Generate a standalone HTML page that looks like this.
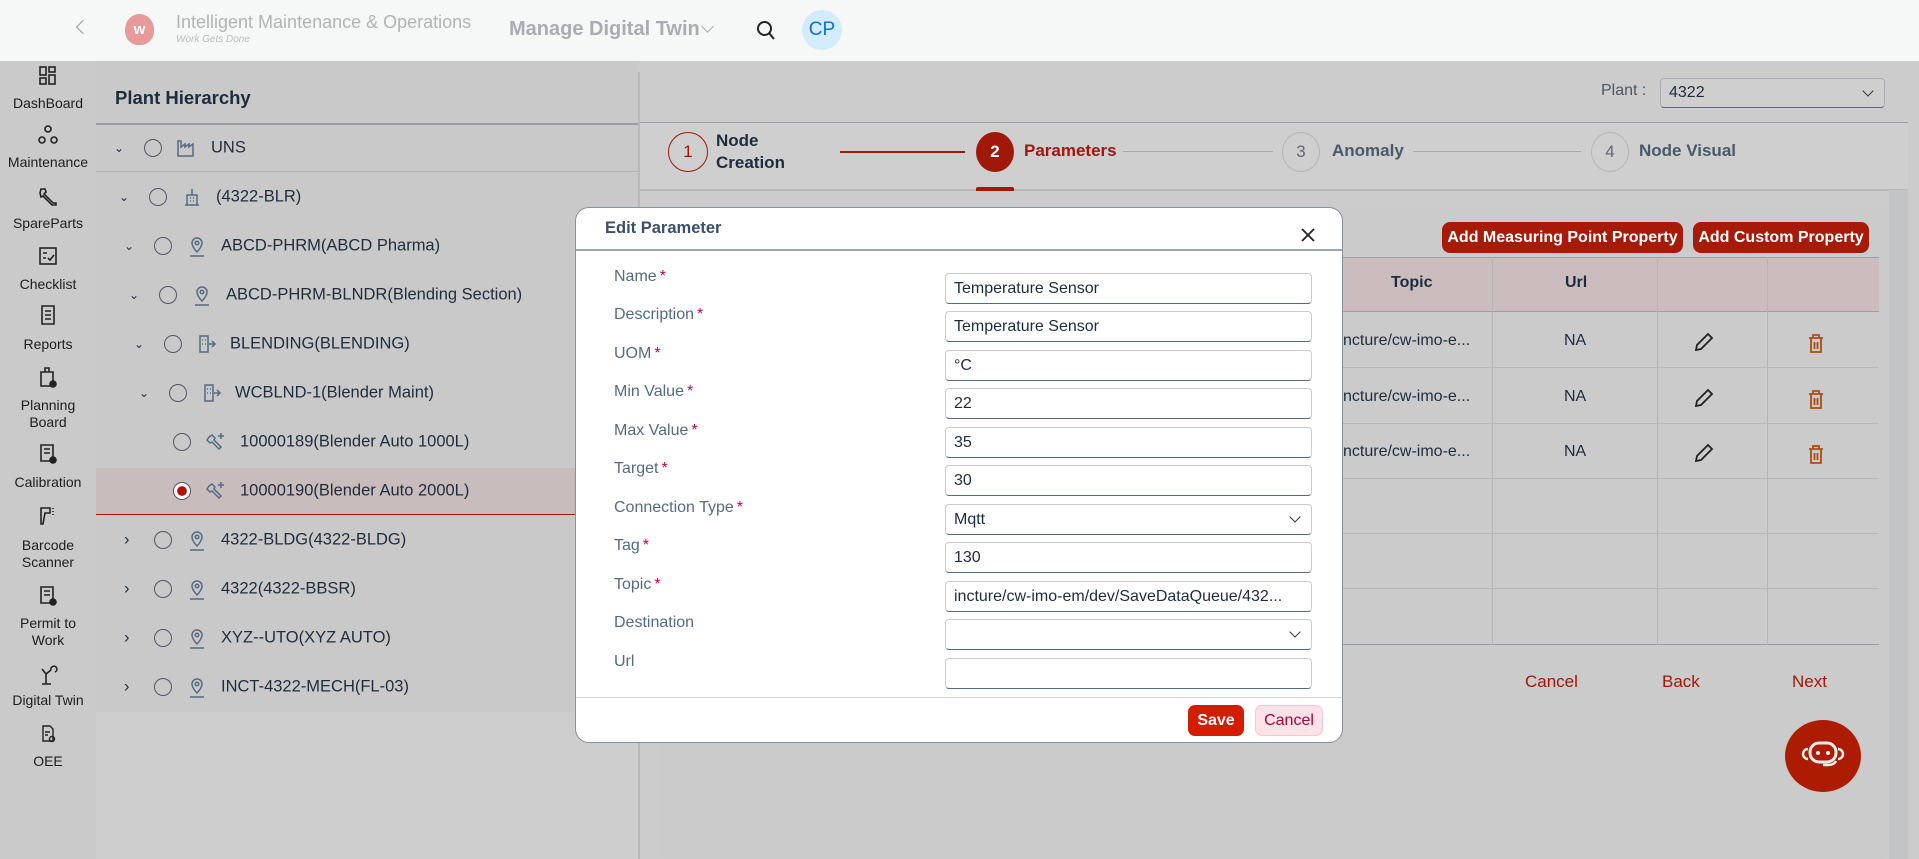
<!DOCTYPE html>
<html><head><meta charset="utf-8"><style>
*{box-sizing:border-box;margin:0;padding:0}
body{width:1919px;height:859px;overflow:hidden;position:relative;background:#cbcbcb;font-family:"Liberation Sans",sans-serif;color:#32363a}
.a{position:absolute}
.top{left:0;top:0;width:1919px;height:61px;background:#f6f7f7}
.side{left:0;top:61px;width:96px;height:798px;background:#cacaca}
.si{position:absolute;left:0;width:96px;text-align:center;font-size:14px;color:#1d1d1d;line-height:17px}
.ic{position:absolute;left:37px}
.tree{left:96px;top:61px;width:542px;height:798px;background:#c9c9c9}
.row{position:absolute;left:96px;width:542px;height:49px;font-size:16.5px;color:#1f2d3d}
.row span{position:absolute;top:50%;transform:translateY(-50%)}
.row svg{position:absolute;top:15px}
.rad{width:18px;height:18px;border:1.5px solid #556;border-radius:50%}
.lbl{position:absolute;left:614px;font-size:16px;color:#556b82}
.lbl b{color:#c0005a;font-weight:normal;margin-left:3px}
.inp{position:absolute;left:945px;width:367px;height:31px;background:#fff;border:1px solid #c8ccd2;border-bottom:1.5px solid #556b82;border-radius:4px;font-size:16px;padding:6px 8px;color:#1d2d3e;white-space:nowrap;overflow:hidden}
.chev{position:absolute;right:12px;top:8px;width:8px;height:8px;border-right:1.5px solid #333;border-bottom:1.5px solid #333;transform:rotate(45deg)}
.th{position:absolute;font-size:16px;font-weight:bold;color:#1d2d3e}
.td{position:absolute;font-size:16px;color:#1d2d3e}
</style></head><body>
<div class="a top"></div>
<div class="a" style="left:78px;top:22px;width:10px;height:10px;border-left:1.5px solid #999;border-bottom:1.5px solid #999;transform:rotate(45deg)"></div>
<div class="a" style="left:125px;top:14px;width:29px;height:31px;border-radius:50% 50% 45% 45%;background:#e89a9a;color:#fff;font-weight:bold;font-size:15px;text-align:center;line-height:32px">w</div>
<div class="a" style="left:176px;top:12px;font-size:18px;color:#b3b3b3">Intelligent Maintenance &amp; Operations</div>
<div class="a" style="left:176px;top:34px;font-size:10px;color:#bbb;font-style:italic">Work Gets Done</div>
<div class="a" style="left:509px;top:18px;font-size:20px;color:#a9adb2;font-weight:bold">Manage Digital Twin</div>
<div class="a" style="left:703px;top:22px;width:9px;height:9px;border-right:1.5px solid #a9adb2;border-bottom:1.5px solid #a9adb2;transform:rotate(45deg)"></div>
<svg class="a" style="left:756px;top:20px" width="20" height="22" viewBox="0 0 20 22"><circle cx="8.5" cy="8.5" r="6.5" fill="none" stroke="#222" stroke-width="2"/><path d="M13 13l5 6" stroke="#222" stroke-width="2"/></svg>
<div class="a" style="left:802px;top:10px;width:40px;height:40px;border-radius:50%;background:#d3ecfb;color:#1470c8;font-size:19px;text-align:center;line-height:40px">CP</div>

<div class="a side"></div>
<svg class="ic" style="top:65px" width="22" height="22" viewBox="0 0 22 22" fill="none" stroke="#222" stroke-width="1.6"><rect x="3" y="2" width="6" height="8"/><rect x="12" y="2" width="6" height="5"/><rect x="3" y="13" width="6" height="6"/><rect x="12" y="10" width="6" height="9"/></svg>
<div class="si" style="top:95px">DashBoard</div>
<svg class="ic" style="top:124px" width="22" height="22" viewBox="0 0 22 22" fill="none" stroke="#222" stroke-width="1.6"><circle cx="11" cy="5" r="3"/><circle cx="5" cy="16" r="3"/><circle cx="17" cy="16" r="3"/></svg>
<div class="si" style="top:154px">Maintenance</div>
<svg class="ic" style="top:185px" width="22" height="22" viewBox="0 0 22 22" fill="none" stroke="#222" stroke-width="1.6"><path d="M4 4l4 0 1 3-2 2 9 9 3 0 0 2-4 0-9-9-2 1-1-4z"/></svg>
<div class="si" style="top:215px">SpareParts</div>
<svg class="ic" style="top:245px" width="22" height="22" viewBox="0 0 22 22" fill="none" stroke="#222" stroke-width="1.6"><rect x="3" y="3" width="16" height="16"/><path d="M6 8h4M6 13h3M11 13l2 2 4-5"/></svg>
<div class="si" style="top:276px">Checklist</div>
<svg class="ic" style="top:304px" width="22" height="22" viewBox="0 0 22 22" fill="none" stroke="#222" stroke-width="1.6"><path d="M5 2h12v18H5zM8 7h6M8 11h6M8 15h6"/></svg>
<div class="si" style="top:336px">Reports</div>
<svg class="ic" style="top:366px" width="22" height="24" viewBox="0 0 22 24" fill="none" stroke="#222" stroke-width="1.6"><path d="M4 6h12v14H4zM8 6V2h4v4"/><circle cx="16" cy="18" r="3" fill="#222"/></svg>
<div class="si" style="top:397px">Planning<br>Board</div>
<svg class="ic" style="top:443px" width="22" height="22" viewBox="0 0 22 22" fill="none" stroke="#222" stroke-width="1.6"><path d="M4 2h12v16H4zM7 6h6M7 10h6"/><circle cx="16" cy="17" r="3" fill="#222"/></svg>
<div class="si" style="top:474px">Calibration</div>
<svg class="ic" style="top:505px" width="22" height="22" viewBox="0 0 22 22" fill="none" stroke="#222" stroke-width="1.6"><path d="M4 3h9v5H8l-2 11H4zM16 3v1M16 6v1M16 9v1"/></svg>
<div class="si" style="top:537px">Barcode<br>Scanner</div>
<svg class="ic" style="top:585px" width="22" height="22" viewBox="0 0 22 22" fill="none" stroke="#222" stroke-width="1.6"><path d="M4 2h12v16H4zM7 6h6M7 10h6"/><circle cx="16" cy="17" r="3" fill="#222"/></svg>
<div class="si" style="top:615px">Permit to<br>Work</div>
<svg class="ic" style="top:664px" width="22" height="22" viewBox="0 0 22 22" fill="none" stroke="#222" stroke-width="1.6"><path d="M5 20h9M9 20V10l-4-5M9 10l5-4M14 6a3 3 0 1 1 4 2"/></svg>
<div class="si" style="top:692px">Digital Twin</div>
<svg class="ic" style="top:724px" width="22" height="20" viewBox="0 0 22 20" fill="none" stroke="#222" stroke-width="1.4"><path d="M6 2h7l3 3v12H6zM8 8h5M8 11h3"/><circle cx="15" cy="15" r="2.5"/></svg>
<div class="si" style="top:753px">OEE</div>

<div class="a tree"></div>
<div class="a" style="left:96px;top:712px;width:542px;height:147px;background:#cdcdcd"></div>
<div class="a" style="left:115px;top:87px;font-size:18.5px;font-weight:bold;color:#1d2d3e">Plant Hierarchy</div>
<div class="a" style="left:96px;top:123px;width:542px;height:2px;background:#9aa0a8"></div>
<div class="a" style="left:96px;top:171px;width:542px;height:1px;background:#b4b4b4"></div>
<div class="a" style="left:96px;top:468px;width:542px;height:47px;background:#c9bcbc;border-bottom:1.5px solid #a01808"></div>

<div class="row" style="top:123px"><span style="left:18px;font-size:12px">⌄</span><span class="rad" style="left:48px"></span><svg style="left:80px" width="20" height="20" viewBox="0 0 20 20" fill="none" stroke="#556b82" stroke-width="1.5"><path d="M2 18V3h3v6l4-3v3l4-3v3l4-3v12z"/></svg><span style="left:115px">UNS</span></div>
<div class="row" style="top:172px"><span style="left:23px;font-size:12px">⌄</span><span class="rad" style="left:53px"></span><svg style="left:86px" width="20" height="20" viewBox="0 0 20 20" fill="none" stroke="#556b82" stroke-width="1.5"><path d="M3 18h14M5 18V8h10v10M10 8V2M8 11h1M11 11h1M8 14h1M11 14h1"/></svg><span style="left:120px">(4322-BLR)</span></div>
<div class="row" style="top:221px"><span style="left:28px;font-size:12px">⌄</span><span class="rad" style="left:58px"></span><svg style="left:91px" width="20" height="22" viewBox="0 0 20 22" fill="none" stroke="#556b82" stroke-width="1.5"><path d="M10 16s-5-5-5-9a5 5 0 0 1 10 0c0 4-5 9-5 9z"/><circle cx="10" cy="7" r="1.8"/><path d="M3 20h14"/></svg><span style="left:125px">ABCD-PHRM(ABCD Pharma)</span></div>
<div class="row" style="top:270px"><span style="left:33px;font-size:12px">⌄</span><span class="rad" style="left:63px"></span><svg style="left:96px" width="20" height="22" viewBox="0 0 20 22" fill="none" stroke="#556b82" stroke-width="1.5"><path d="M10 16s-5-5-5-9a5 5 0 0 1 10 0c0 4-5 9-5 9z"/><circle cx="10" cy="7" r="1.8"/><path d="M3 20h14"/></svg><span style="left:130px">ABCD-PHRM-BLNDR(Blending Section)</span></div>
<div class="row" style="top:319px"><span style="left:38px;font-size:12px">⌄</span><span class="rad" style="left:68px"></span><svg style="left:101px" width="20" height="20" viewBox="0 0 20 20" fill="none" stroke="#556b82" stroke-width="1.5"><path d="M3 2h8v16H3zM5 6h1M8 6h1M5 10h1M8 10h1M12 10h6M15 7l3 3-3 3"/></svg><span style="left:134px">BLENDING(BLENDING)</span></div>
<div class="row" style="top:368px"><span style="left:43px;font-size:12px">⌄</span><span class="rad" style="left:73px"></span><svg style="left:106px" width="20" height="20" viewBox="0 0 20 20" fill="none" stroke="#556b82" stroke-width="1.5"><path d="M3 2h8v16H3zM5 6h1M8 6h1M5 10h1M8 10h1M12 10h6M15 7l3 3-3 3"/></svg><span style="left:139px">WCBLND-1(Blender Maint)</span></div>
<div class="row" style="top:417px"><span class="rad" style="left:77px"></span><svg style="left:110px" width="20" height="20" viewBox="0 0 20 20" fill="none" stroke="#556b82" stroke-width="1.5"><path d="M3 5l3-2 3 3-1 2 7 7-2 2-7-7-2 1-3-3zM15 1v6M12 4h6"/></svg><span style="left:144px">10000189(Blender Auto 1000L)</span></div>
<div class="row" style="top:466px"><span class="rad" style="left:77px;background:radial-gradient(#b01200 40%,#fff 45%)"></span><svg style="left:110px" width="20" height="20" viewBox="0 0 20 20" fill="none" stroke="#556b82" stroke-width="1.5"><path d="M3 5l3-2 3 3-1 2 7 7-2 2-7-7-2 1-3-3zM15 1v6M12 4h6"/></svg><span style="left:144px">10000190(Blender Auto 2000L)</span></div>
<div class="row" style="top:515px"><span style="left:28px">›</span><span class="rad" style="left:58px"></span><svg style="left:91px" width="20" height="22" viewBox="0 0 20 22" fill="none" stroke="#556b82" stroke-width="1.5"><path d="M10 16s-5-5-5-9a5 5 0 0 1 10 0c0 4-5 9-5 9z"/><circle cx="10" cy="7" r="1.8"/><path d="M3 20h14"/></svg><span style="left:125px">4322-BLDG(4322-BLDG)</span></div>
<div class="row" style="top:564px"><span style="left:28px">›</span><span class="rad" style="left:58px"></span><svg style="left:91px" width="20" height="22" viewBox="0 0 20 22" fill="none" stroke="#556b82" stroke-width="1.5"><path d="M10 16s-5-5-5-9a5 5 0 0 1 10 0c0 4-5 9-5 9z"/><circle cx="10" cy="7" r="1.8"/><path d="M3 20h14"/></svg><span style="left:125px">4322(4322-BBSR)</span></div>
<div class="row" style="top:613px"><span style="left:28px">›</span><span class="rad" style="left:58px"></span><svg style="left:91px" width="20" height="22" viewBox="0 0 20 22" fill="none" stroke="#556b82" stroke-width="1.5"><path d="M10 16s-5-5-5-9a5 5 0 0 1 10 0c0 4-5 9-5 9z"/><circle cx="10" cy="7" r="1.8"/><path d="M3 20h14"/></svg><span style="left:125px">XYZ--UTO(XYZ AUTO)</span></div>
<div class="row" style="top:662px"><span style="left:28px">›</span><span class="rad" style="left:58px"></span><svg style="left:91px" width="20" height="22" viewBox="0 0 20 22" fill="none" stroke="#556b82" stroke-width="1.5"><path d="M10 16s-5-5-5-9a5 5 0 0 1 10 0c0 4-5 9-5 9z"/><circle cx="10" cy="7" r="1.8"/><path d="M3 20h14"/></svg><span style="left:125px">INCT-4322-MECH(FL-03)</span></div>

<div class="a" style="left:638px;top:72px;width:2px;height:787px;background:#b8b8b8"></div>
<div class="a" style="left:640px;top:61px;width:1279px;height:798px;background:#cccccc"></div>
<div class="a" style="left:1601px;top:82px;font-size:16px;color:#4a5868">Plant :</div>
<div class="a" style="left:1660px;top:78px;width:225px;height:30px;background:#cfcfcf;border:1px solid #a8adb3;border-bottom:1.5px solid #5a6a80;border-radius:4px;font-size:16px;padding:5px 8px;color:#1d2d3e">4322<div class="chev" style="top:8px"></div></div>
<div class="a" style="left:640px;top:122px;width:1268px;height:1.5px;background:#9aa0a8"></div>
<div class="a" style="left:640px;top:123px;width:1268px;height:67px;background:#cfcfcf"></div>
<div class="a" style="left:640px;top:189px;width:1268px;height:2px;background:#b8b8b8"></div>

<div class="a" style="left:668px;top:132px;width:40px;height:40px;border:1.5px solid #a01808;border-radius:50%;color:#a01808;text-align:center;line-height:38px;font-size:17px">1</div>
<div class="a" style="left:716px;top:130px;font-size:17px;font-weight:bold;color:#1d2d3e;line-height:22px">Node<br>Creation</div>
<div class="a" style="left:840px;top:151px;width:125px;height:1.5px;background:#a01808"></div>
<div class="a" style="left:976px;top:132px;width:38px;height:40px;border-radius:50%;background:#a01808;color:#fff;text-align:center;line-height:40px;font-size:17px;font-weight:bold">2</div>
<div class="a" style="left:976px;top:187px;width:38px;height:4px;background:#a01808;border-radius:2px 2px 0 0"></div>
<div class="a" style="left:1024px;top:141px;font-size:17px;font-weight:bold;color:#a01808">Parameters</div>
<div class="a" style="left:1123px;top:151px;width:150px;height:1px;background:#aaa"></div>
<div class="a" style="left:1282px;top:132px;width:38px;height:40px;border:1px solid #b5b5b5;border-radius:50%;color:#667;text-align:center;line-height:38px;font-size:17px">3</div>
<div class="a" style="left:1332px;top:141px;font-size:17px;font-weight:bold;color:#4a5868">Anomaly</div>
<div class="a" style="left:1413px;top:151px;width:168px;height:1px;background:#aaa"></div>
<div class="a" style="left:1591px;top:132px;width:38px;height:40px;border:1px solid #b5b5b5;border-radius:50%;color:#667;text-align:center;line-height:38px;font-size:17px">4</div>
<div class="a" style="left:1639px;top:141px;font-size:17px;font-weight:bold;color:#4a5868">Node Visual</div>

<div class="a" style="left:1889px;top:190px;width:19px;height:669px;background:#c3c4c6"></div>
<div class="a" style="left:658px;top:208px;width:1231px;height:651px;background:#cbcbcb;border-radius:8px"></div>
<div class="a" style="left:1442px;top:222px;width:241px;height:31px;background:#a81a08;border-radius:8px;color:#fff;font-size:16px;font-weight:bold;text-align:center;line-height:31px">Add Measuring Point Property</div>
<div class="a" style="left:1693px;top:222px;width:176px;height:31px;background:#a81a08;border-radius:8px;color:#fff;font-size:16px;font-weight:bold;text-align:center;line-height:31px">Add Custom Property</div>
<div class="a" style="left:1340px;top:257px;width:539px;height:55px;background:#cbbdbd;border-top:1px solid #9aa0a8;border-bottom:1.5px solid #9aa0a8"></div>
<div class="a" style="left:1340px;top:257px;width:539px;height:388px;border-bottom:1.5px solid #9aa0a8"></div>
<div class="a" style="left:1492px;top:257px;width:1px;height:388px;background:#b5b5b5"></div>
<div class="a" style="left:1657px;top:257px;width:1px;height:388px;background:#b5b5b5"></div>
<div class="a" style="left:1767px;top:257px;width:1px;height:388px;background:#b5b5b5"></div>
<div class="a" style="left:1340px;top:367px;width:539px;height:1px;background:#b5b5b5"></div>
<div class="a" style="left:1340px;top:423px;width:539px;height:1px;background:#b5b5b5"></div>
<div class="a" style="left:1340px;top:478px;width:539px;height:1px;background:#b5b5b5"></div>
<div class="a" style="left:1340px;top:533px;width:539px;height:1px;background:#b5b5b5"></div>
<div class="a" style="left:1340px;top:588px;width:539px;height:1px;background:#b5b5b5"></div>
<div class="th" style="left:1391px;top:274px">Topic</div>
<div class="th" style="left:1565px;top:274px">Url</div>
<div class="td" style="left:1343px;top:332px">ncture/cw-imo-e...</div><div class="td" style="left:1564px;top:332px">NA</div>
<div class="td" style="left:1343px;top:388px">ncture/cw-imo-e...</div><div class="td" style="left:1564px;top:388px">NA</div>
<div class="td" style="left:1343px;top:443px">ncture/cw-imo-e...</div><div class="td" style="left:1564px;top:443px">NA</div>
<svg class="a" style="left:1692px;top:330px" width="24" height="24" viewBox="0 0 24 24" fill="none" stroke="#222" stroke-width="1.8"><path d="M4 20l1-5 11-11 4 4-11 11z"/></svg>
<svg class="a" style="left:1692px;top:386px" width="24" height="24" viewBox="0 0 24 24" fill="none" stroke="#222" stroke-width="1.8"><path d="M4 20l1-5 11-11 4 4-11 11z"/></svg>
<svg class="a" style="left:1692px;top:441px" width="24" height="24" viewBox="0 0 24 24" fill="none" stroke="#222" stroke-width="1.8"><path d="M4 20l1-5 11-11 4 4-11 11z"/></svg>
<svg class="a" style="left:1806px;top:332px" width="20" height="22" viewBox="0 0 20 22" fill="none" stroke="#b34a10" stroke-width="1.8"><path d="M3 6h14M7 6V3h6v3M5 6v14h10V6M8.5 10v7M11.5 10v7"/></svg>
<svg class="a" style="left:1806px;top:388px" width="20" height="22" viewBox="0 0 20 22" fill="none" stroke="#b34a10" stroke-width="1.8"><path d="M3 6h14M7 6V3h6v3M5 6v14h10V6M8.5 10v7M11.5 10v7"/></svg>
<svg class="a" style="left:1806px;top:443px" width="20" height="22" viewBox="0 0 20 22" fill="none" stroke="#b34a10" stroke-width="1.8"><path d="M3 6h14M7 6V3h6v3M5 6v14h10V6M8.5 10v7M11.5 10v7"/></svg>
<div class="a" style="left:1525px;top:672px;font-size:17px;color:#a01808">Cancel</div>
<div class="a" style="left:1662px;top:672px;font-size:17px;color:#a01808">Back</div>
<div class="a" style="left:1792px;top:672px;font-size:17px;color:#a01808">Next</div>
<div class="a" style="left:1785px;top:720px;width:76px;height:72px;border-radius:50%;background:#ad1c00"></div>
<svg class="a" style="left:1801px;top:737px" width="44" height="36" viewBox="0 0 44 36"><rect x="9" y="6" width="26" height="19" rx="9" fill="none" stroke="#eee" stroke-width="3"/><circle cx="17" cy="16" r="2" fill="#eee"/><circle cx="27" cy="16" r="2" fill="#eee"/><path d="M7 12a4 4 0 0 0 0 10M37 12a4 4 0 0 1 0 10M35 24q-2 4-8 4h-5" fill="none" stroke="#eee" stroke-width="2.5"/></svg>

<div class="a" style="left:575px;top:207px;width:768px;height:536px;background:#fff;border-radius:14px;border:1px solid #8a9099"></div>
<div class="a" style="left:605px;top:219px;font-size:16.5px;font-weight:bold;color:#3b4f66">Edit Parameter</div>
<svg class="a" style="left:1300px;top:227px" width="16" height="16" viewBox="0 0 16 16"><path d="M2 2l12 12M14 2L2 14" stroke="#222" stroke-width="1.8"/></svg>
<div class="a" style="left:576px;top:249px;width:766px;height:1.5px;background:#9aa6b4"></div>
<div class="lbl" style="top:268px">Name<b>*</b></div>
<div class="lbl" style="top:306px">Description<b>*</b></div>
<div class="lbl" style="top:345px">UOM<b>*</b></div>
<div class="lbl" style="top:383px">Min Value<b>*</b></div>
<div class="lbl" style="top:422px">Max Value<b>*</b></div>
<div class="lbl" style="top:460px">Target<b>*</b></div>
<div class="lbl" style="top:499px">Connection Type<b>*</b></div>
<div class="lbl" style="top:537px">Tag<b>*</b></div>
<div class="lbl" style="top:576px">Topic<b>*</b></div>
<div class="lbl" style="top:614px">Destination</div>
<div class="lbl" style="top:653px">Url</div>
<div class="inp" style="top:273px">Temperature Sensor</div>
<div class="inp" style="top:311px">Temperature Sensor</div>
<div class="inp" style="top:350px">°C</div>
<div class="inp" style="top:388px">22</div>
<div class="inp" style="top:427px">35</div>
<div class="inp" style="top:465px">30</div>
<div class="inp" style="top:504px">Mqtt<div class="chev"></div></div>
<div class="inp" style="top:542px">130</div>
<div class="inp" style="top:581px">incture/cw-imo-em/dev/SaveDataQueue/432...</div>
<div class="inp" style="top:619px"><div class="chev"></div></div>
<div class="inp" style="top:658px"></div>
<div class="a" style="left:576px;top:697px;width:766px;height:1px;background:#d5d9de"></div>
<div class="a" style="left:1188px;top:705px;width:56px;height:31px;background:#d41c00;border-radius:7px;color:#fff;font-size:16px;font-weight:bold;text-align:center;line-height:31px">Save</div>
<div class="a" style="left:1255px;top:705px;width:68px;height:31px;background:#fde2e8;border:1px solid #f7c6d2;border-radius:7px;color:#b0003a;font-size:16px;text-align:center;line-height:29px">Cancel</div>
</body></html>
